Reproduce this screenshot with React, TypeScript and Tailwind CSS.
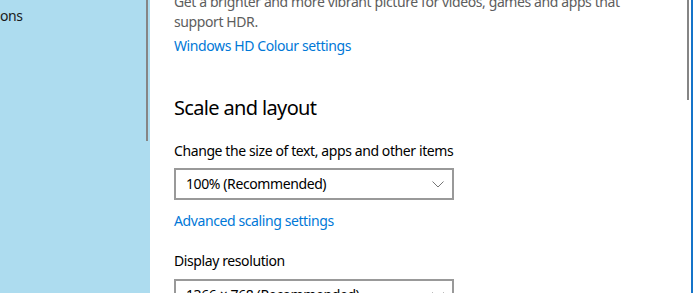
import React from "react";

const font = { fontFamily: '"Noto Sans", "Open Sans", sans-serif' };

function Chevron() {
  return (
    <svg width="12" height="7" viewBox="0 0 12 7" className="shrink-0">
      <path d="M0.5 0.5 L6 6 L11.5 0.5" fill="none" stroke="#767676" strokeWidth="1" />
    </svg>
  );
}

function Dropdown({ label }: { label: string }) {
  return (
    <div className="w-[280px] h-[32px] border-2 border-[#999999] bg-white flex items-center justify-between pl-[10px] pr-[8px] shrink-0">
      <span className="text-[14px] leading-[20px] tracking-[-0.4px] text-black">{label}</span>
      <Chevron />
    </div>
  );
}

export default function App() {
  return (
    <div className="w-[693px] h-[293px] flex overflow-hidden bg-white" style={font}>
      <div className="relative w-[150px] h-full bg-[#addcef] shrink-0">
        <div className="absolute left-[146px] top-0 w-[2px] h-[141px] bg-[#858585]" />
        <div className="pt-[6px] text-[14px] leading-[20px] tracking-[-0.4px] text-[#1a1a1a]">ons</div>
      </div>
      <div className="relative flex-1 h-full">
        <div className="flex flex-col items-start pl-[24px] tracking-[-0.4px]">
          <p className="mt-[-8px] text-[14px] leading-[20px] text-[#5d5d5d] whitespace-nowrap">
            Get a brighter and more vibrant picture for videos, games and apps that
            <br />
            support HDR.
          </p>
          <a className="mt-[4px] text-[14px] leading-[20px] text-[#0078d7] whitespace-nowrap">
            Windows HD Colour settings
          </a>
          <h2 className="mt-[38px] text-[20px] leading-[28px] tracking-[-0.65px] text-black whitespace-nowrap">
            Scale and layout
          </h2>
          <div className="mt-[19px] text-[14px] leading-[20px] text-black whitespace-nowrap">
            Change the size of text, apps and other items
          </div>
          <div className="mt-[7px]">
            <Dropdown label="100% (Recommended)" />
          </div>
          <a className="mt-[11px] text-[14px] leading-[20px] text-[#0078d7] whitespace-nowrap">
            Advanced scaling settings
          </a>
          <div className="mt-[20px] text-[14px] leading-[20px] text-black whitespace-nowrap">
            Display resolution
          </div>
          <div className="mt-[8px]">
            <Dropdown label="1366 × 768 (Recommended)" />
          </div>
        </div>
        <div className="absolute left-[537px] top-0 w-[2px] h-[100px] bg-[#858585]" />
        <div className="absolute left-[541px] top-0 w-[2px] h-full bg-[#1574c9]" />
      </div>
    </div>
  );
}
